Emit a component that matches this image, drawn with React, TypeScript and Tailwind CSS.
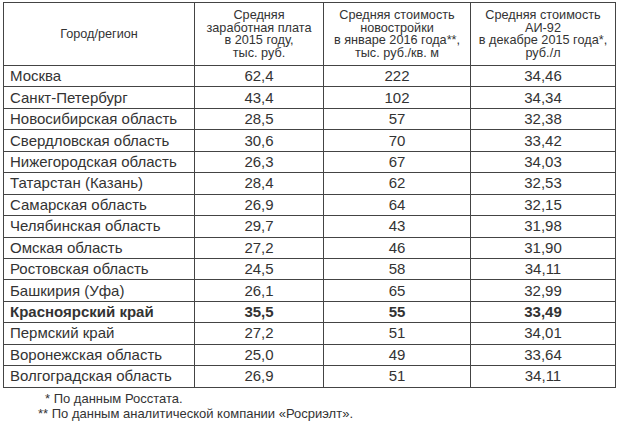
import React from "react";

const rows: [string, string, string, string, boolean?][] = [
  ["Москва", "62,4", "222", "34,46"],
  ["Санкт-Петербург", "43,4", "102", "34,34"],
  ["Новосибирская область", "28,5", "57", "32,38"],
  ["Свердловская область", "30,6", "70", "33,42"],
  ["Нижегородская область", "26,3", "67", "34,03"],
  ["Татарстан (Казань)", "28,4", "62", "32,53"],
  ["Самарская область", "26,9", "64", "32,15"],
  ["Челябинская область", "29,7", "43", "31,98"],
  ["Омская область", "27,2", "46", "31,90"],
  ["Ростовская область", "24,5", "58", "34,11"],
  ["Башкирия (Уфа)", "26,1", "65", "32,99"],
  ["Красноярский край", "35,5", "55", "33,49", true],
  ["Пермский край", "27,2", "51", "34,01"],
  ["Воронежская область", "25,0", "49", "33,64"],
  ["Волгоградская область", "26,9", "51", "34,11"],
];

export default function App() {
  return (
    <div
      className="w-[620px] h-[425px] bg-white text-[#333] overflow-hidden"
      style={{ fontFamily: '"Liberation Sans", Arial, sans-serif' }}
    >
      <div className="pt-[2px] pl-[3px]">
        <table className="table-fixed border-collapse w-[612px] border border-[#444]">
          <colgroup>
            <col className="w-[191px]" />
            <col className="w-[129px]" />
            <col className="w-[147px]" />
            <col className="w-[145px]" />
          </colgroup>
          <thead>
            <tr className="h-[63px] text-[12.7px] leading-[12.5px] font-normal">
              <th className="border border-[#444] font-normal text-center align-middle">Город/регион</th>
              <th className="border border-[#444] font-normal text-center align-middle">
                Средняя
                <br />
                заработная плата
                <br />в 2015 году,
                <br />
                тыс. руб.
              </th>
              <th className="border border-[#444] font-normal text-center align-middle">
                Средняя стоимость
                <br />
                новостройки
                <br />в январе 2016 года**,
                <br />
                тыс. руб./кв. м
              </th>
              <th className="border border-[#444] font-normal text-center align-middle">
                Средняя стоимость
                <br />
                АИ-92
                <br />в декабре 2015 года*,
                <br />
                руб./л
              </th>
            </tr>
          </thead>
          <tbody>
            {rows.map(([name, a, b, c, bold]) => (
              <tr key={name} className={`h-[21.45px] text-[15px] leading-[18px] ${bold ? "font-bold" : ""}`}>
                <td className="border border-[#444] pl-[6px] whitespace-nowrap">{name}</td>
                <td className="border border-[#444] text-center">{a}</td>
                <td className="border border-[#444] text-center">{b}</td>
                <td className="border border-[#444] text-center">{c}</td>
              </tr>
            ))}
          </tbody>
        </table>
        <div className="mt-[3px] text-[13px] leading-[15.5px]">
          <div className="pl-[42px]">* По данным Росстата.</div>
          <div className="pl-[35px]">** По данным аналитической компании «Росриэлт».</div>
        </div>
      </div>
    </div>
  );
}
